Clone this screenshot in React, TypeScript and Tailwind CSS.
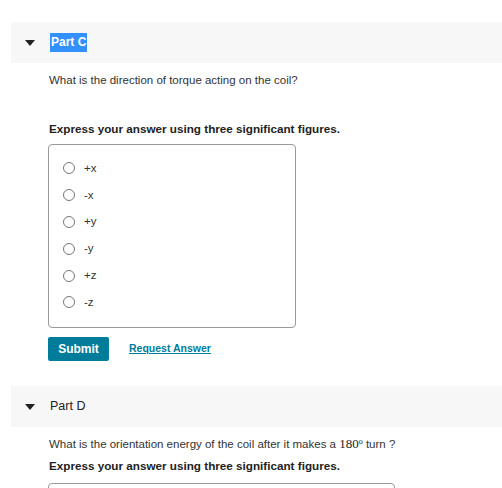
import React from 'react';

const options = ['+x', '-x', '+y', '-y', '+z', '-z'];

function Caret() {
    return (
        <svg width="10" height="6" viewBox="0 0 10 6" className="shrink-0">
            <path d="M0 0 L10 0 L5 6 Z" fill="#222" />
        </svg>
    );
}

function App() {
    return (
        <div
            className="w-[502px] h-[488px] overflow-hidden bg-white text-[#333]"
            style={{ fontFamily: '"Liberation Sans", Arial, sans-serif' }}
        >
            <div className="pt-[22px] pl-[11px]">
                <div className="h-[41px] bg-[#f7f7f7] flex items-center pl-[14px]">
                    <Caret />
                    <span className="ml-[15px] bg-[#3390ff] text-white font-bold text-[12px] leading-[19px] px-[1px]">
                        Part C
                    </span>
                </div>
            </div>

            <div className="pl-[49px]">
                <p className="mt-[9px] text-[11.5px] leading-[16px]">
                    What is the direction of torque acting on the coil?
                </p>
                <p className="mt-[33px] text-[11.7px] font-bold leading-[16px] text-[#222]">
                    Express your answer using three significant figures.
                </p>
                <div className="mt-[7px] ml-[-1px] w-[248px] h-[184px] border border-[#999] rounded-[4px] pt-[10px] pl-[14px]">
                    {options.map((o) => (
                        <div key={o} className="h-[26.8px] flex items-center">
                            <span className="w-[12px] h-[12px] rounded-full border border-[#777] bg-white" />
                            <span className="ml-[9px] text-[11.5px] text-[#333]">{o}</span>
                        </div>
                    ))}
                </div>
                <div className="mt-[9px] flex items-center">
                    <button className="ml-[-1px] w-[61px] h-[24px] bg-[#007c9b] text-white text-[12px] font-bold rounded-[2px]">
                        Submit
                    </button>
                    <a className="ml-[20px] text-[10.5px] font-bold text-[#007c9b] underline">
                        Request Answer
                    </a>
                </div>
            </div>

            <div className="mt-[25px] pl-[11px]">
                <div className="h-[41px] bg-[#f7f7f7] flex items-center pl-[14px]">
                    <Caret />
                    <span className="ml-[15px] text-[12.5px] text-[#222]">Part D</span>
                </div>
            </div>

            <div className="pl-[49px]">
                <p className="mt-[9px] text-[11.5px] leading-[16px]">
                    What is the orientation energy of the coil after it makes a{' '}
                    <span
                        className="text-[13px] text-[#222]"
                        style={{ fontFamily: '"Liberation Serif", serif' }}
                    >
                        180<sup className="text-[8px]">o</sup>
                    </span>{' '}
                    turn ?
                </p>
                <p className="mt-[6px] text-[11.7px] font-bold leading-[16px] text-[#222]">
                    Express your answer using three significant figures.
                </p>
                <div className="mt-[9px] ml-[-1px] w-[347px] h-[40px] border border-[#999] rounded-[4px]" />
            </div>
        </div>
    );
}

export default App;
